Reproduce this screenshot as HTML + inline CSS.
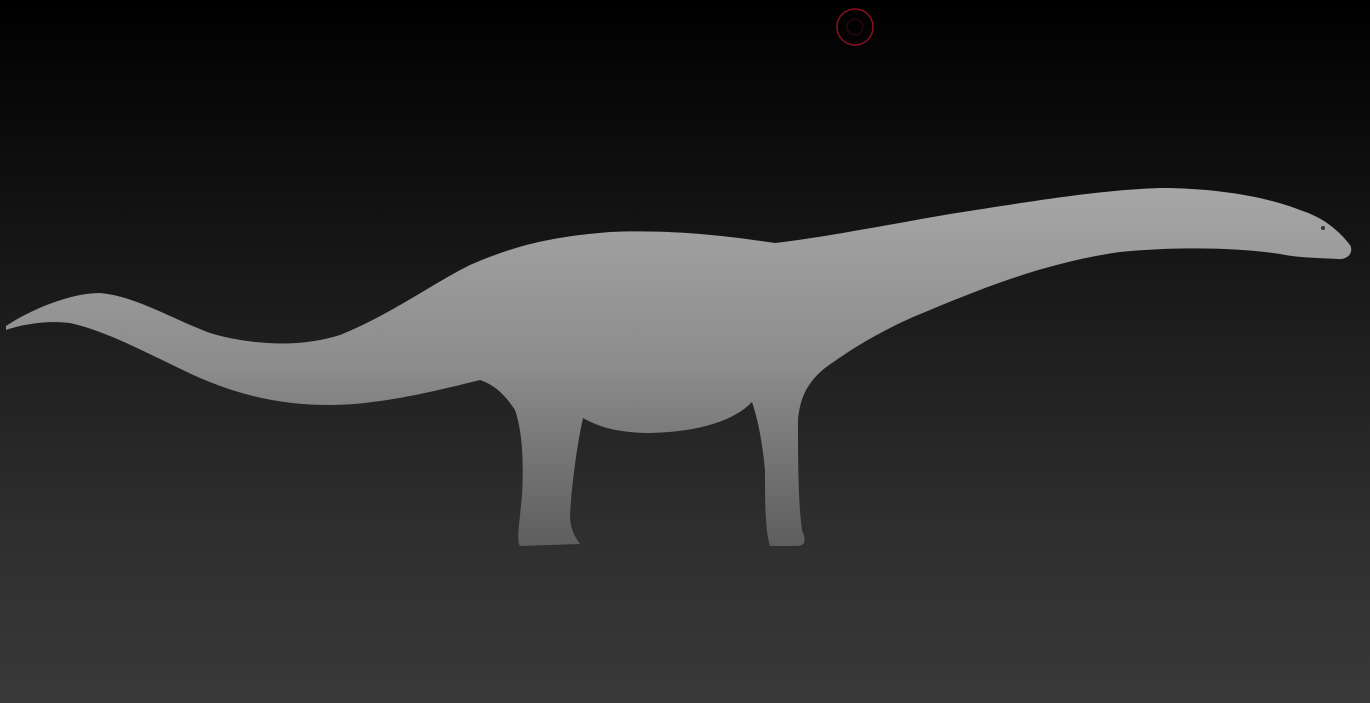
<!DOCTYPE html>
<html><head><style>
html,body{margin:0;padding:0;width:1370px;height:703px;overflow:hidden;background:linear-gradient(#000 0%,#0c0c0c 20%,#1f1f1f 50%,#2e2e2e 75%,#393939 100%);}
svg{position:absolute;left:0;top:0}
</style></head><body>
<svg width="1370" height="703" viewBox="0 0 1370 703">
<defs>
<linearGradient id="g" x1="0" y1="0" x2="0" y2="1">
<stop offset="0" stop-color="#a6a6a6"/>
<stop offset="0.5" stop-color="#8c8c8c"/>
<stop offset="1" stop-color="#5e5e5e"/>
</linearGradient>
</defs>
<circle cx="855" cy="27" r="18" fill="none" stroke="#8a1020" stroke-width="1.5"/>
<circle cx="855" cy="27" r="8" fill="none" stroke="#3a0810" stroke-width="1"/>
<path fill="url(#g)" d="M6,326 C30,310 70,293 100,293 C135,296 170,318 210,333 C250,345 300,348 340,335 C390,315 430,285 470,265 C520,243 560,236 610,232 C680,229 740,238 775,243 C820,238 870,228 950,214 C1040,200 1100,190 1160,188 C1220,188 1270,198 1300,210 C1325,218 1340,232 1350,245 C1354,252 1348,260 1338,259 C1320,258 1300,258 1280,254 C1240,248 1180,246 1120,252 C1050,262 990,285 930,310 C880,330 850,350 825,368 C810,380 800,395 798,420 C798,460 798,500 802,530 C806,540 806,545 798,546 L770,546 C765,530 765,500 765,470 C762,440 758,420 752,402 C735,420 700,432 650,433 C615,433 595,425 583,418 C578,440 572,480 570,515 C570,530 576,538 580,544 L520,546 C516,540 520,520 522,495 C524,460 522,430 515,410 C505,395 495,385 480,380 C440,390 380,405 330,405 C280,405 240,395 200,378 C150,355 110,332 70,323 C45,320 20,325 6,330 Z"/>
<circle cx="1323" cy="228" r="2" fill="#333"/>
</svg>
</body></html>
